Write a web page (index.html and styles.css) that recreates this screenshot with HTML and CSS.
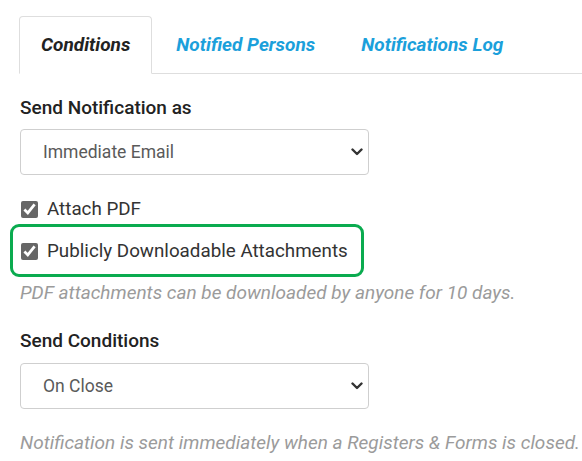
FILE: index.html
```html
<!DOCTYPE html>
<html lang="en">
<head>
<meta charset="utf-8">
<title>Notification settings</title>
<link rel="stylesheet" href="styles.css">
</head>
<body>
<div class="page">
  <nav class="tabs">
    <a class="tab active">Conditions</a>
    <a class="tab">Notified Persons</a>
    <a class="tab">Notifications Log</a>
  </nav>
  <div class="content">
    <div class="field-label">Send Notification as</div>
    <div class="select-wrap">
      <select class="select"><option>Immediate Email</option></select>
      <svg class="chevron" viewBox="0 0 12 8" width="12" height="8"><path d="M1.5 1.5 L6 6 L10.5 1.5" fill="none" stroke="#333" stroke-width="2.4" stroke-linecap="round" stroke-linejoin="round"/></svg>
    </div>
    <label class="check first"><input type="checkbox" checked><span>Attach PDF</span></label>
    <div class="highlight-wrap">
      <label class="check"><input type="checkbox" checked><span>Publicly Downloadable Attachments</span></label>
      <span class="highlight"></span>
    </div>
    <p class="help help-first">PDF attachments can be downloaded by anyone for 10 days.</p>
    <div class="field-label second">Send Conditions</div>
    <div class="select-wrap">
      <select class="select"><option>On Close</option></select>
      <svg class="chevron" viewBox="0 0 12 8" width="12" height="8"><path d="M1.5 1.5 L6 6 L10.5 1.5" fill="none" stroke="#333" stroke-width="2.4" stroke-linecap="round" stroke-linejoin="round"/></svg>
    </div>
    <p class="help help-last">Notification is sent immediately when a Registers &amp; Forms is closed.</p>
  </div>
</div>
</body>
</html>
```
FILE: styles.css
```css
html, body {
  margin: 0;
  padding: 0;
  background: #fff;
}
body {
  font-family: Roboto, "Liberation Sans", sans-serif;
  color: #222;
}
.page {
  padding-top: 16px;
}
.tabs {
  display: flex;
  margin-left: 19px;
  border-bottom: 1px solid #dedede;
}
.tab {
  display: block;
  height: 56px;
  line-height: 56px;
  padding: 0 21px;
  border: 1px solid transparent;
  border-radius: 4px 4px 0 0;
  margin-bottom: -1px;
  margin-right: 2px;
  font-size: 19px;
  font-weight: 700;
  font-style: italic;
  color: #1ba0db;
  white-space: nowrap;
}
.tab.active {
  color: #222;
  border-color: #dedede;
  border-bottom-color: #fff;
  background: #fff;
}
.content {
  padding-left: 20px;
}
.field-label {
  margin-top: 22.5px;
  font-size: 19px;
  line-height: 22px;
  font-weight: 500;
  color: #222;
}
.field-label.second {
  margin-top: 26px;
}
.select-wrap {
  position: relative;
  width: 349px;
  margin-top: 10.5px;
}
.select {
  appearance: none;
  -webkit-appearance: none;
  display: block;
  width: 349px;
  height: 46px;
  box-sizing: border-box;
  border: 1px solid #cfcfcf;
  border-radius: 4px;
  background: #fff;
  padding: 0 30px 0 22px;
  font-family: Roboto, "Liberation Sans", sans-serif;
  font-size: 17.5px;
  color: #5a5a5a;
}
.chevron {
  position: absolute;
  right: 6px;
  top: 19px;
  pointer-events: none;
}
.check {
  display: flex;
  align-items: center;
  height: 24px;
  font-size: 18.8px;
  color: #333;
  white-space: nowrap;
}
.check.first {
  margin-top: 22px;
}
.check input {
  width: 17px;
  height: 17px;
  margin: 0 9px 0 1px;
  accent-color: #666;
}
.highlight-wrap {
  position: relative;
  margin-top: 18px;
}
.highlight {
  position: absolute;
  left: -10px;
  top: -15px;
  width: 354px;
  height: 53px;
  box-sizing: border-box;
  border: 3px solid #0aab4f;
  border-radius: 9px;
  pointer-events: none;
}
.help {
  margin: 19px 0 0;
  font-size: 19px;
  line-height: 22px;
  font-style: italic;
  color: #9b9b9b;
  white-space: nowrap;
}
.help.help-last {
  margin-top: 23.5px;
}
```
